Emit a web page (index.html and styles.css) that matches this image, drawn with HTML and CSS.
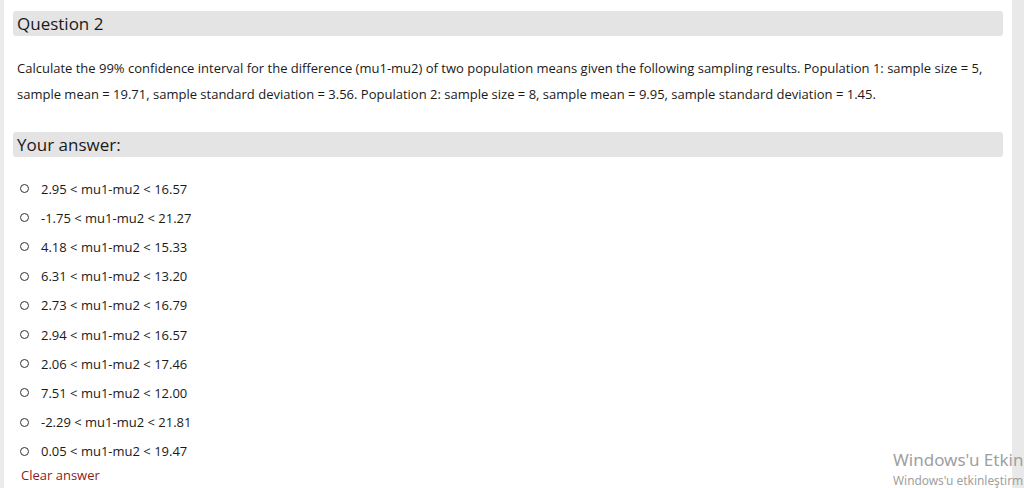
FILE: index.html
```html
<!DOCTYPE html>
<html lang="en">
<head>
  <meta charset="UTF-8" />
  <title>Question 2</title>
  <link rel="stylesheet" href="styles.css">
</head>
<body>
  <div class="page">
    <div class="quiz">
      <h2 class="bar">Question 2</h2>

      <p class="question">
        Calculate the 99% confidence interval for the difference (mu1-mu2) of two population means given the following sampling results. Population 1: sample size = 5, sample mean = 19.71, sample standard deviation = 3.56. Population 2: sample size = 8, sample mean = 9.95, sample standard deviation = 1.45.
      </p>

      <h3 class="bar">Your answer:</h3>

      <ul class="options">
        <li><span class="radio"></span>2.95 &lt; mu1-mu2 &lt; 16.57</li>
        <li><span class="radio"></span>-1.75 &lt; mu1-mu2 &lt; 21.27</li>
        <li><span class="radio"></span>4.18 &lt; mu1-mu2 &lt; 15.33</li>
        <li><span class="radio"></span>6.31 &lt; mu1-mu2 &lt; 13.20</li>
        <li><span class="radio"></span>2.73 &lt; mu1-mu2 &lt; 16.79</li>
        <li><span class="radio"></span>2.94 &lt; mu1-mu2 &lt; 16.57</li>
        <li><span class="radio"></span>2.06 &lt; mu1-mu2 &lt; 17.46</li>
        <li><span class="radio"></span>7.51 &lt; mu1-mu2 &lt; 12.00</li>
        <li><span class="radio"></span>-2.29 &lt; mu1-mu2 &lt; 21.81</li>
        <li><span class="radio"></span>0.05 &lt; mu1-mu2 &lt; 19.47</li>
      </ul>

      <a class="clear" href="#">Clear answer</a>
    </div>
    <div class="side"></div>
  </div>

  <div class="watermark">
    <div class="wm-title">Windows'u Etkin</div>
    <div class="wm-sub">Windows'u etkinleştirm</div>
  </div>
</body>
</html>
```

FILE: styles.css
```css
* {
  margin: 0;
  padding: 0;
  box-sizing: border-box;
}

body {
  background: #fff;
  color: #1a1a1a;
  font-family: 'Open Sans', sans-serif;
  width: 1024px;
  height: 488px;
  overflow: hidden;
  position: relative;
}

.page {
  display: flex;
  height: 488px;
  border-left: 4px solid #ebebeb;
}

.quiz {
  width: 1008px;
  padding: 11px 9px 0 9px;
}

.side {
  flex: 1;
  background: #e9e9e9;
}

.bar {
  background: #e4e4e4;
  border-radius: 3px;
  height: 25px;
  padding-left: 4px;
  font-size: 17px;
  font-weight: normal;
  line-height: 25px;
}

.question {
  font-size: 13px;
  line-height: 25.5px;
  padding: 20px 4px 0 4px;
  margin-bottom: 25px;
}

.options {
  list-style: none;
  padding: 17px 0 0 4px;
}

.options li {
  display: flex;
  align-items: center;
  height: 29.2px;
  font-size: 13px;
}

.radio {
  width: 9px;
  height: 9px;
  border: 1px solid #333;
  border-radius: 50%;
  margin: 0 12px 0 3px;
  flex-shrink: 0;
}

.clear {
  display: block;
  color: #8a1c1c;
  text-decoration: none;
  font-size: 13px;
  padding-left: 8px;
}

.watermark {
  position: absolute;
  left: 893px;
  top: 448px;
  white-space: nowrap;
  color: #a0a0a0;
  font-family: 'Noto Sans', sans-serif;
}

.wm-title {
  font-size: 17px;
  line-height: 24px;
}

.wm-sub {
  font-size: 11.9px;
  line-height: 16px;
}
```
